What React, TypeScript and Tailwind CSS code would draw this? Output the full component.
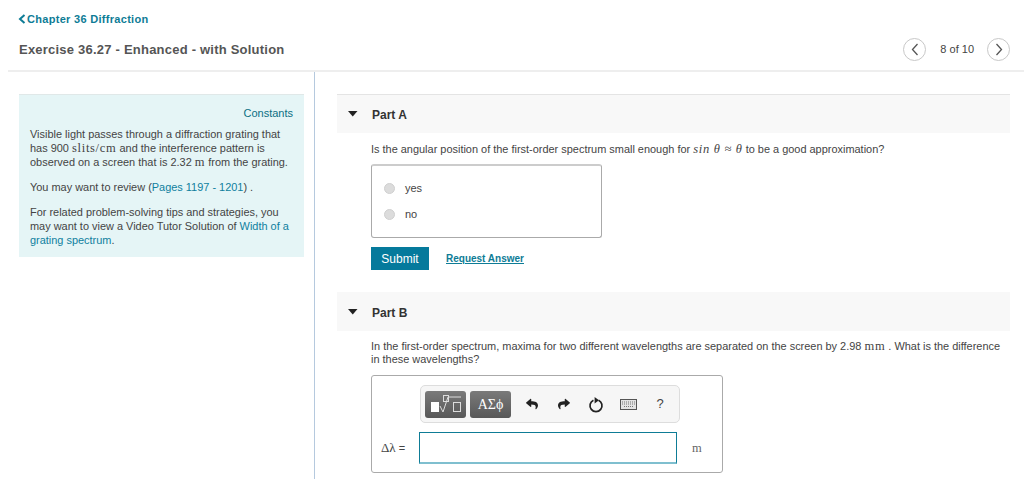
import { ReactNode } from "react";
import { FaReply, FaShare } from "react-icons/fa";

const link = "text-[#0f7f9e]";
const serif = "font-['Liberation_Serif',serif]";
const math = "font-['Liberation_Serif',serif] text-[12.5px] tracking-[0.7px]";

function PartHeader({ label, top }: { label: string; top?: boolean }) {
  return (
    <div className={`h-[39px] bg-[#f8f8f8] flex items-center ${top ? "border-t border-[#e4e4e4]" : ""}`}>
      <svg width="10" height="6" viewBox="0 0 10 6" className="ml-[11px] shrink-0">
        <path d="M0 0h9.5L4.75 5.5z" fill="#222" />
      </svg>
      <span className="ml-[14px] pt-[2px] text-[12px] font-bold text-[#333]">{label}</span>
    </div>
  );
}

function Radio({ label }: { label: string }) {
  return (
    <div className="flex items-center h-[26px]">
      <span className="w-[11px] h-[11px] rounded-full bg-[#dcdcdc] border border-[#d0d0d0]" />
      <span className="ml-[10px] text-[11px] text-[#444]">{label}</span>
    </div>
  );
}

function Para({ children, className = "" }: { children: ReactNode; className?: string }) {
  return <p className={`text-[10.95px] text-[#444] ${className}`}>{children}</p>;
}

function NavButton({ dir }: { dir: "left" | "right" }) {
  return (
    <span className="w-[23px] h-[23px] rounded-full border border-[#c8c8c8] flex items-center justify-center">
      <svg width="8" height="13" viewBox="0 0 8 13" fill="none" stroke="#555" strokeWidth="1.3">
        <path d={dir === "left" ? "M6.5 1L1.5 6.5l5 5.5" : "M1.5 1l5 5.5-5 5.5"} />
      </svg>
    </span>
  );
}

function ToolIcon({ children }: { children: ReactNode }) {
  return <span className="w-[32px] flex items-center justify-center">{children}</span>;
}

function Toolbar() {
  return (
    <div className="w-[260px] h-[38px] ml-[48px] rounded-[5px] border border-[#ddd] bg-[#f6f6f6] flex items-center pl-[4px]">
      <span className="w-[41px] h-[27px] rounded-[3px] bg-gradient-to-b from-[#7a7a7a] to-[#585858]">
        <svg width="41" height="27" viewBox="0 0 41 27" fill="none">
          <rect x="6" y="11" width="8" height="10" fill="#fff" />
          <rect x="18.5" y="4.5" width="5" height="6" stroke="#ddd" />
          <path d="M15 15l3 6 5-15h13" stroke="#ddd" />
          <rect x="28.5" y="11.5" width="7" height="9" stroke="#ddd" />
        </svg>
      </span>
      <span className={`ml-[4px] w-[41px] h-[27px] rounded-[3px] bg-gradient-to-b from-[#7a7a7a] to-[#585858] text-white text-[14px] flex items-center justify-center ${serif}`}>
        ΑΣϕ
      </span>
      <span className="ml-[5px] flex items-center">
        <ToolIcon><FaReply size={12} color="#222" /></ToolIcon>
        <ToolIcon><FaShare size={12} color="#222" /></ToolIcon>
        <ToolIcon>
          <svg width="16" height="17" viewBox="0 0 16 17" fill="none">
            <path d="M10.6 4.2a6 6 0 1 1-5.2 0" stroke="#222" strokeWidth="1.7" />
            <path d="M6.6 1v6.4L11 4.2z" fill="#222" />
          </svg>
        </ToolIcon>
        <ToolIcon>
          <svg width="17" height="11" viewBox="0 0 17 11">
            <rect x="0.5" y="0.5" width="16" height="10" fill="#e4e4e4" stroke="#555" />
            <path d="M2 3h13M2 5h13M4 7.5h9" stroke="#777" strokeDasharray="1 1" />
          </svg>
        </ToolIcon>
        <ToolIcon><span className="text-[13px] text-[#444]">?</span></ToolIcon>
      </span>
    </div>
  );
}

export default function App() {
  return (
    <div className="w-[1024px] h-[479px] overflow-hidden bg-white font-['Liberation_Sans',Arial,sans-serif]">
      <header className="h-[72px] ml-[8px] border-b-2 border-[#eee] flex flex-col">
        <div className="flex items-center h-[14px] mt-[12px] ml-[10px]">
          <svg width="8" height="10" viewBox="0 0 8 10" fill="none" stroke="#0e7c96" strokeWidth="2">
            <path d="M6.5 1L2 5l4.5 4" />
          </svg>
          <span className="ml-[1px] text-[11px] font-bold tracking-[0.3px] text-[#0e7c96]">Chapter 36 Diffraction</span>
        </div>
        <div className="flex items-center justify-between mt-[12px] ml-[11px] mr-[14px]">
          <h1 className="text-[13px] font-bold tracking-[0.22px] text-[#555]">Exercise 36.27 - Enhanced - with Solution</h1>
          <div className="flex items-center text-[11px] text-[#444]">
            <NavButton dir="left" />
            <span className="ml-[14px] mr-[13px]">8 of 10</span>
            <NavButton dir="right" />
          </div>
        </div>
      </header>

      <div className="flex h-[407px]">
        <aside className="w-[307px] ml-[8px] pl-[11px] pt-[22px] border-r border-[#b5c9de] shrink-0">
          <div className="h-[163px] w-[285px] bg-[#e5f5f6] border-t border-[#e0e8e8] pl-[11px] pr-[11px] pt-[11px] leading-[14px]">
            <div className="text-right text-[11px] leading-[14px] text-[#0b6e83]">Constants</div>
            <Para className="mt-[7px] leading-[14px]">
              Visible light passes through a diffraction grating that has 900 <span className={math}>slits/cm</span> and the interference pattern is observed on a screen that is 2.32 <span className={math}>m</span> from the grating.
            </Para>
            <Para className="mt-[11px] leading-[14px]">
              You may want to review (<span className={link}>Pages 1197 - 1201</span>) .
            </Para>
            <Para className="mt-[11px] leading-[14px]">
              For related problem-solving tips and strategies, you may want to view a Video Tutor Solution of <span className={link}>Width of a grating spectrum</span>.
            </Para>
          </div>
        </aside>

        <main className="w-[673px] ml-[22px] pt-[22px]">
          <PartHeader label="Part A" top />
          <div className="pl-[34px]">
            <Para className="mt-[9px] leading-[14px]">
              Is the angular position of the first-order spectrum small enough for <span className={`${math} italic`}>sin θ ≈ θ</span> to be a good approximation?
            </Para>
            <div className="mt-[8px] w-[231px] h-[74px] rounded-[3px] border border-[#aaa] border-t-2 border-t-[#ccc] pl-[12px] pt-[9px]">
              <Radio label="yes" />
              <Radio label="no" />
            </div>
            <div className="mt-[9px] flex items-center">
              <button className="w-[58px] h-[23px] bg-[#057a9c] text-white text-[12px]">Submit</button>
              <span className="ml-[17px] text-[10px] font-bold underline text-[#0e7c96]">Request Answer</span>
            </div>
          </div>

          <div className="mt-[22px]">
            <PartHeader label="Part B" />
          </div>
          <div className="pl-[34px] pr-[4px]">
            <Para className="mt-[9px] leading-[13px]">
              In the first-order spectrum, maxima for two different wavelengths are separated on the screen by 2.98 <span className={math}>mm</span> . What is the difference in these wavelengths?
            </Para>
            <div className="mt-[9px] w-[352px] h-[98px] rounded-[3px] border border-[#aaa] pt-[9px]">
              <Toolbar />
              <div className="flex items-center mt-[9px] ml-[9px]">
                <span className="w-[38px] text-[11px] text-[#444]"><span className={`text-[13px] ${serif}`}>Δλ</span> =</span>
                <div className="w-[258px] h-[32px] border border-[#0e7c96] border-b-2 border-b-[#7fbfcf]" />
                <span className={`ml-[15px] ${math} text-[#666]`}>m</span>
              </div>
            </div>
          </div>
        </main>
      </div>
    </div>
  );
}
